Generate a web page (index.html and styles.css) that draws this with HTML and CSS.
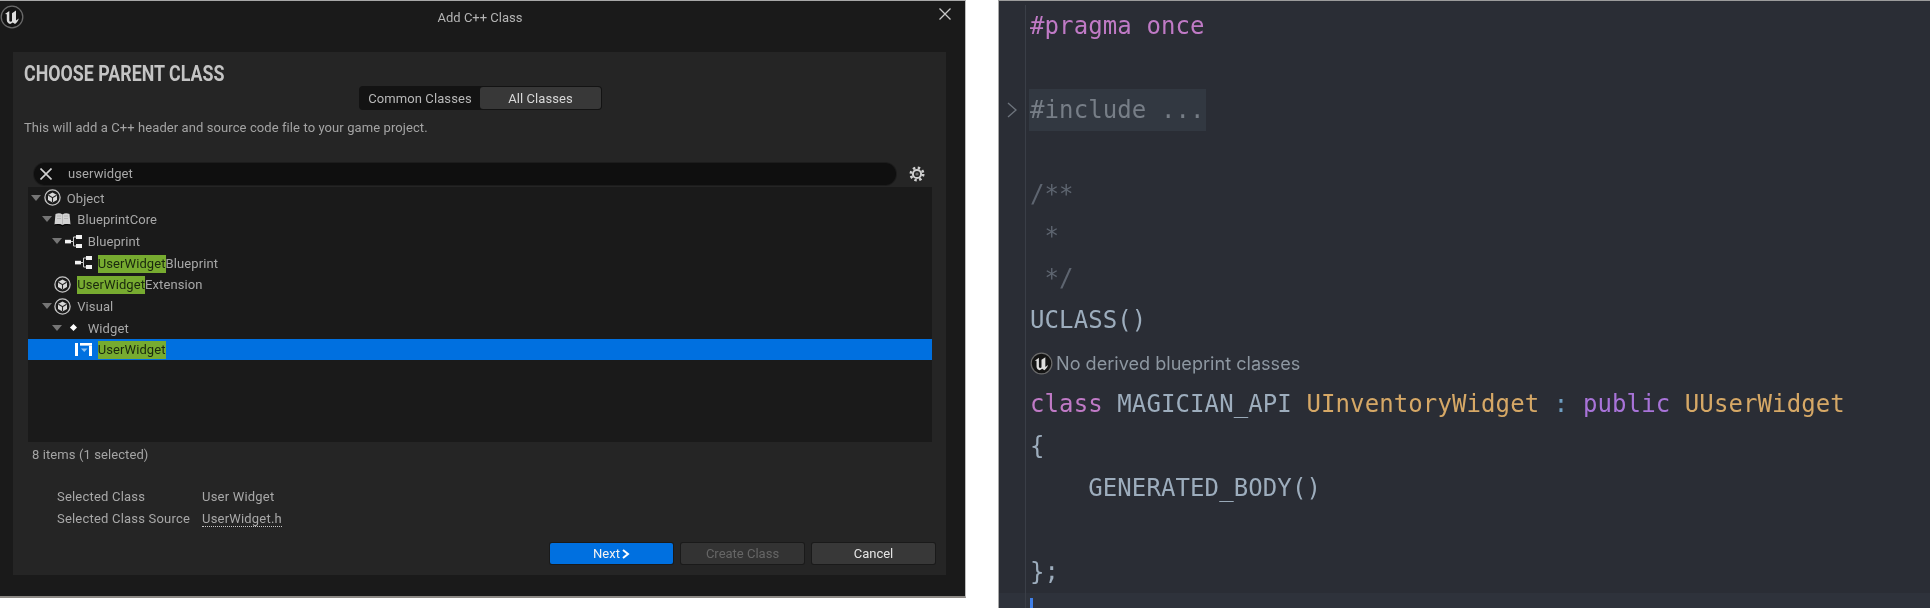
FILE: index.html
```html
<!DOCTYPE html>
<html lang="en">
<head>
<meta charset="utf-8">
<title>Add C++ Class</title>
<link rel="stylesheet" href="styles.css">
</head>
<body>
<svg class="defs" width="0" height="0" aria-hidden="true">
  <symbol id="ue" viewBox="0 0 24 24">
    <circle cx="12" cy="12" r="10.8" fill="#141414" stroke="#6a6a6a" stroke-width="1.3"/>
    <path d="M5 9 L9.3 6 V15.5 C9.3 17 11.5 17 12 16 V8.2 L16 5.6 V15.6 L18.8 13.6 C18.2 16 16.6 18 15 19 L12.8 17.4 L10.2 19 C8.2 18.4 6.8 17 6.8 15 V9.2 Z" fill="#ddd"/>
  </symbol>
  <symbol id="cube" viewBox="0 0 17 17">
    <circle cx="8.5" cy="8.5" r="7.6" fill="none" stroke="#c4c4c4" stroke-width="1.3"/>
    <path d="M8.5 3.4 L13 6 V11 L8.5 13.6 L4 11 V6 Z" fill="#d8d8d8"/>
    <path d="M4.4 6.2 L8.5 8.6 L12.6 6.2 M8.5 8.6 V13.2" fill="none" stroke="#222" stroke-width="1.1"/>
  </symbol>
  <symbol id="tree" viewBox="0 0 17 13">
    <path d="M6 6.5 H8.5 V2 H11 M8.5 6.5 V11 H11" fill="none" stroke="#cfcfcf" stroke-width="1"/>
    <rect x="0" y="4.8" width="6" height="3.6" fill="#f2f2f2"/>
    <rect x="11" y="0" width="6" height="4" fill="#f2f2f2"/>
    <rect x="11" y="9" width="6" height="4" fill="#f2f2f2"/>
  </symbol>
  <symbol id="book" viewBox="0 0 17 15">
    <path d="M1.5 2 C4 1 6.5 1 8.5 2.4 C10.5 1 13 1 15.5 2 L16.5 12.5 C13.5 11.6 10.5 11.8 8.5 13 C6.5 11.8 3.5 11.6 .5 12.5 Z" fill="#d2d2d2"/>
    <path d="M8.5 2.4 V13 M3 4 H7 M3 6.5 H7 M10 4 H14 M10 6.5 H14" stroke="#a0a0a0" stroke-width=".6" fill="none"/>
    <path d="M.5 13 C3.5 12.2 6.5 12.4 8.5 14 C10.5 12.4 13.5 12.2 16.5 13" stroke="#000" fill="none"/>
  </symbol>
  <symbol id="widget" viewBox="0 0 17 13">
    <rect x="0" y="0" width="3" height="13" fill="#fff"/>
    <rect x="5" y="0" width="12" height="2.6" fill="#fff"/>
    <rect x="14" y="2.6" width="3" height="10.4" fill="#fff"/>
    <path d="M6 5.4 H12.5 L9.25 9 Z" fill="#8ec3f2"/>
  </symbol>
</svg>

<section class="ue-window">
  <header class="titlebar">
    <svg class="ue-logo"><use href="#ue"/></svg>
    <span class="window-title">Add C++ Class</span>
    <svg class="close-icon" viewBox="0 0 12 12"><path d="M.5 .5 L11.5 11.5 M11.5 .5 L.5 11.5"/></svg>
  </header>

  <main class="panel">
    <h1 class="panel-title"><span>CHOOSE PARENT CLASS</span></h1>
    <div class="toggle">
      <span class="toggle-item">Common Classes</span>
      <span class="toggle-item toggle-on">All Classes</span>
    </div>
    <p class="intro">This will add a C++ header and source code file to your game project.</p>

    <div class="search-row">
      <div class="search">
        <svg class="search-x" viewBox="0 0 12 12"><path d="M.5 .5 L11.5 11.5 M11.5 .5 L.5 11.5"/></svg>
        <span class="search-text">userwidget</span>
      </div>
      <svg class="gear" viewBox="0 0 16 16">
        <circle cx="8" cy="8" r="6.2" class="gear-teeth"/>
        <circle cx="8" cy="8" r="4.1" class="gear-ring"/>
        <circle cx="8" cy="8" r="1.6" class="gear-hub"/>
      </svg>
    </div>

    <ul class="tree">
      <li class="row l0"><i class="arrow"></i><svg class="ico ico-round"><use href="#cube"/></svg><span>Object</span></li>
      <li class="row l1"><i class="arrow"></i><svg class="ico ico-book"><use href="#book"/></svg><span>BlueprintCore</span></li>
      <li class="row l2"><i class="arrow"></i><svg class="ico ico-flat"><use href="#tree"/></svg><span>Blueprint</span></li>
      <li class="row l3"><i class="arrow-none"></i><svg class="ico ico-flat"><use href="#tree"/></svg><span><mark>UserWidget</mark>Blueprint</span></li>
      <li class="row l1"><i class="arrow-none"></i><svg class="ico ico-round"><use href="#cube"/></svg><span><mark>UserWidget</mark>Extension</span></li>
      <li class="row l1"><i class="arrow"></i><svg class="ico ico-round"><use href="#cube"/></svg><span>Visual</span></li>
      <li class="row l2"><i class="arrow"></i><span class="ico diamond-slot"><i class="diamond"></i></span><span>Widget</span></li>
      <li class="row l3 selected"><i class="arrow-none"></i><svg class="ico ico-flat"><use href="#widget"/></svg><span><mark>UserWidget</mark></span></li>
    </ul>

    <p class="status">8 items (1 selected)</p>

    <dl class="details">
      <dt>Selected Class</dt><dd>User Widget</dd>
      <dt>Selected Class Source</dt><dd><a class="source-link">UserWidget.h</a></dd>
    </dl>

    <footer class="actions">
      <button class="btn btn-primary">Next<svg class="chev" viewBox="0 0 8 10"><path d="M1 1 L6 5 L1 9"/></svg></button>
      <button class="btn btn-disabled">Create Class</button>
      <button class="btn">Cancel</button>
    </footer>
  </main>
</section>

<section class="ide">
  <div class="line"><span class="gutter"></span><code><span class="kw">#pragma once</span></code></div>
  <div class="line"><span class="gutter"></span><code></code></div>
  <div class="line"><span class="gutter"><svg class="fold" viewBox="0 0 10 16"><path d="M1 1 L9 8 L1 15"/></svg></span><code><span class="folded">#include ...</span></code></div>
  <div class="line"><span class="gutter"></span><code></code></div>
  <div class="line"><span class="gutter"></span><code class="cm">/**</code></div>
  <div class="line"><span class="gutter"></span><code class="cm"> *</code></div>
  <div class="line"><span class="gutter"></span><code class="cm"> */</code></div>
  <div class="line"><span class="gutter"></span><code>UCLASS()</code></div>
  <div class="line"><span class="gutter"></span><div class="hint"><svg class="hint-logo"><use href="#ue"/></svg><span>No derived blueprint classes</span></div></div>
  <div class="line"><span class="gutter"></span><code><span class="kw">class</span> MAGICIAN_API <span class="type">UInventoryWidget</span> <span class="punct">:</span> <span class="kw2">public</span> <span class="type">UUserWidget</span></code></div>
  <div class="line"><span class="gutter"></span><code>{</code></div>
  <div class="line"><span class="gutter"></span><code>    GENERATED_BODY()</code></div>
  <div class="line"><span class="gutter"></span><code></code></div>
  <div class="line"><span class="gutter"></span><code>};</code></div>
  <div class="line line-current"><span class="gutter"></span><code><i class="caret"></i></code></div>
</section>
</body>
</html>
```

FILE: styles.css
```css
* { box-sizing: border-box; }

html, body { margin: 0; padding: 0; }

body {
  width: 1930px;
  height: 608px;
  display: flex;
  align-items: flex-start;
  background: #fff;
  overflow: hidden;
  font-family: Roboto, "Liberation Sans", sans-serif;
}

.defs { position: absolute; }

/* Unreal dialog */
.ue-window {
  width: 966px;
  height: 598px;
  display: flex;
  flex-direction: column;
  padding: 0 19px 21px 13px;
  background: #1a1a1a;
  border-top: 1px solid #a8a8a8;
  border-right: 1px solid #bdbdbd;
  border-bottom: 2px solid #8d8a86;
  filter: blur(.35px);
}

.titlebar {
  height: 51px;
  flex: none;
  margin: 0 -19px 0 -13px;
  display: grid;
  grid-template-columns: 1fr auto 1fr;
  align-items: start;
  padding: 4px 14px 0 0;
}

.ue-logo { width: 24px; height: 24px; }

.window-title {
  margin: 5px 0 0 9px;
  font-size: 13px;
  line-height: 16px;
  color: #b4b4b4;
}

.close-icon {
  justify-self: end;
  width: 12px;
  height: 12px;
  margin: 3px 0 0 0;
  stroke: #c8c8c8;
  stroke-width: 1.3;
  fill: none;
}

.panel {
  flex: 1;
  display: flex;
  flex-direction: column;
  background: #252525;
  min-height: 0;
  letter-spacing: .09px;
}

.panel-title {
  margin: 11px 0 0 11px;
  font-size: 22px;
  line-height: 22px;
  font-weight: 700;
  color: #c4c4c4;
  white-space: nowrap;
  letter-spacing: 0;
}

.panel-title span {
  display: inline-block;
  transform-origin: left center;
  transform: scaleX(.81);
}

.toggle {
  align-self: center;
  margin: 1px 0 0 2px;
  height: 24px;
  display: flex;
  background: #131313;
  border-radius: 4px;
  padding: 1px;
  font-size: 13px;
  color: #b8b8b8;
}

.toggle-item {
  width: 120px;
  display: flex;
  align-items: center;
  justify-content: center;
  border-radius: 3px;
}

.toggle-on {
  width: 121px;
  background: #383838;
  color: #d8d8d8;
}

.intro {
  margin: 10px 0 0 11px;
  font-size: 13px;
  line-height: 16px;
  color: #a4a4a4;
}

.search-row {
  margin: 26px 0 0 21px;
  height: 24px;
  display: flex;
  align-items: center;
}

.search {
  width: 862px;
  height: 22px;
  display: flex;
  align-items: center;
  background: #0f0f0f;
  border-radius: 11px;
  box-shadow: 0 0 0 1px #1c1c1c;
  font-size: 13px;
  color: #a8a8a8;
}

.search-x {
  width: 12px;
  height: 12px;
  margin-left: 6px;
  stroke: #d0d0d0;
  stroke-width: 1.6;
  fill: none;
}

.search-text { margin: -1px 0 0 16px; }

.gear {
  width: 16px;
  height: 16px;
  margin-left: 13px;
  fill: none;
}

.gear-teeth { stroke: #cfcfcf; stroke-width: 2.6; stroke-dasharray: 2.4 2.47; }
.gear-ring { stroke: #cfcfcf; stroke-width: 2; }
.gear-hub { fill: #6a6a6a; }

.tree {
  list-style: none;
  margin: 1px 0 0 15px;
  padding: 0;
  width: 904px;
  height: 255px;
  flex: none;
  background: #1a1a1a;
  font-size: 13px;
  color: #a8a8a8;
}

.row {
  height: 21.67px;
  display: flex;
  align-items: center;
  white-space: nowrap;
}

.row > span:last-child { padding-top: 1px; }

.l0 { padding-left: 3px; }
.l1 { padding-left: 13.5px; }
.l2 { padding-left: 24px; }
.l3 { padding-left: 34px; }

.arrow {
  flex: none;
  width: 0;
  height: 0;
  margin-right: 1px;
  border-style: solid;
  border-width: 6px 5px 0;
  border-color: #757575 transparent transparent;
}

.arrow-none { flex: none; width: 11px; }

.ico {
  flex: none;
  width: 17px;
  margin: 0 6px 0 1.75px;
}

.ico-round { height: 17px; }
.ico-book { height: 15px; }
.ico-flat { height: 13px; }

.diamond-slot {
  display: flex;
  align-items: center;
  justify-content: center;
  height: 13px;
}

.diamond {
  width: 5px;
  height: 5px;
  background: #fff;
  transform: rotate(45deg);
}

mark {
  background: #77ab30;
  color: #1a280e;
  padding: 1px 0 2px;
}

.selected { background: #0070e0; color: #fff; }

.status {
  margin: 5px 0 0 19px;
  font-size: 13px;
  line-height: 16px;
  color: #a4a4a4;
}

.details {
  margin: 26px 0 0 44px;
  display: grid;
  grid-template-columns: 145px auto;
  justify-content: start;
  row-gap: 6px;
  font-size: 13px;
  line-height: 16px;
  color: #a8a8a8;
  letter-spacing: .2px;
}

.details dd { margin: 0; }

.source-link {
  display: inline-block;
  line-height: 15px;
  border-bottom: 1px dotted #c8c8c8;
}

.actions {
  margin: auto 11px 11px 0;
  display: flex;
  justify-content: flex-end;
  gap: 8px;
}

.btn {
  width: 123px;
  height: 21px;
  padding: 0;
  display: flex;
  align-items: center;
  justify-content: center;
  border: 0;
  border-radius: 2px;
  background: #383838;
  box-shadow: 0 0 0 1px #1a1a1a;
  color: #e4e4e4;
  font: 13px/16px Roboto, "Liberation Sans", sans-serif;
}

.btn-primary { background: #0070e0; color: #f2f2f2; }
.btn-disabled { background: #333; color: #666; }

.chev {
  width: 8px;
  height: 10px;
  margin-left: 2px;
  fill: none;
  stroke: #fff;
  stroke-width: 2;
}

/* IDE */
.ide {
  margin-left: 32px;
  flex: 1;
  height: 608px;
  padding-top: 5px;
  background: #2a2d35;
  border-top: 1px solid #9c9c9c;
  border-left: 1px solid #a8a8a8;
  overflow: hidden;
  filter: blur(.35px);
}

.line {
  height: 42px;
  display: flex;
  align-items: stretch;
  margin-top: 0;
}

.line:first-child { margin-top: -1px; }

.gutter {
  flex: none;
  width: 27px;
  display: flex;
  align-items: center;
  justify-content: flex-end;
  padding-right: 8px;
  border-right: 1px solid #3a3e47;
}

.fold {
  width: 10px;
  height: 16px;
  fill: none;
  stroke: #6d737c;
  stroke-width: 1.4;
}

code {
  margin-left: 4px;
  font: 24px/42px "DejaVu Sans Mono", "Liberation Mono", monospace;
  letter-spacing: .1px;
  color: #9dadbd;
  white-space: pre;
}

.kw { color: #c07ac6; }
.kw2 { color: #a873d8; }
.type { color: #d6a866; }
.punct { color: #6f9fc2; }
.cm { color: #5e6570; }

.folded {
  display: inline-block;
  padding: 0 1px;
  margin-left: -1px;
  background: #323841;
  color: #777e87;
}

.hint {
  margin-left: 4px;
  padding-top: 2px;
  display: flex;
  align-items: center;
  gap: 3px;
  font-family: Inter, Roboto, sans-serif;
  font-size: 18.1px;
  color: #8d97a1;
}

.hint-logo { width: 23px; height: 23px; }

.line-current { background: #2e323b; }

.caret {
  display: inline-block;
  width: 3px;
  height: 32px;
  margin-top: 5px;
  background: #3f7fe8;
  vertical-align: top;
}
```
